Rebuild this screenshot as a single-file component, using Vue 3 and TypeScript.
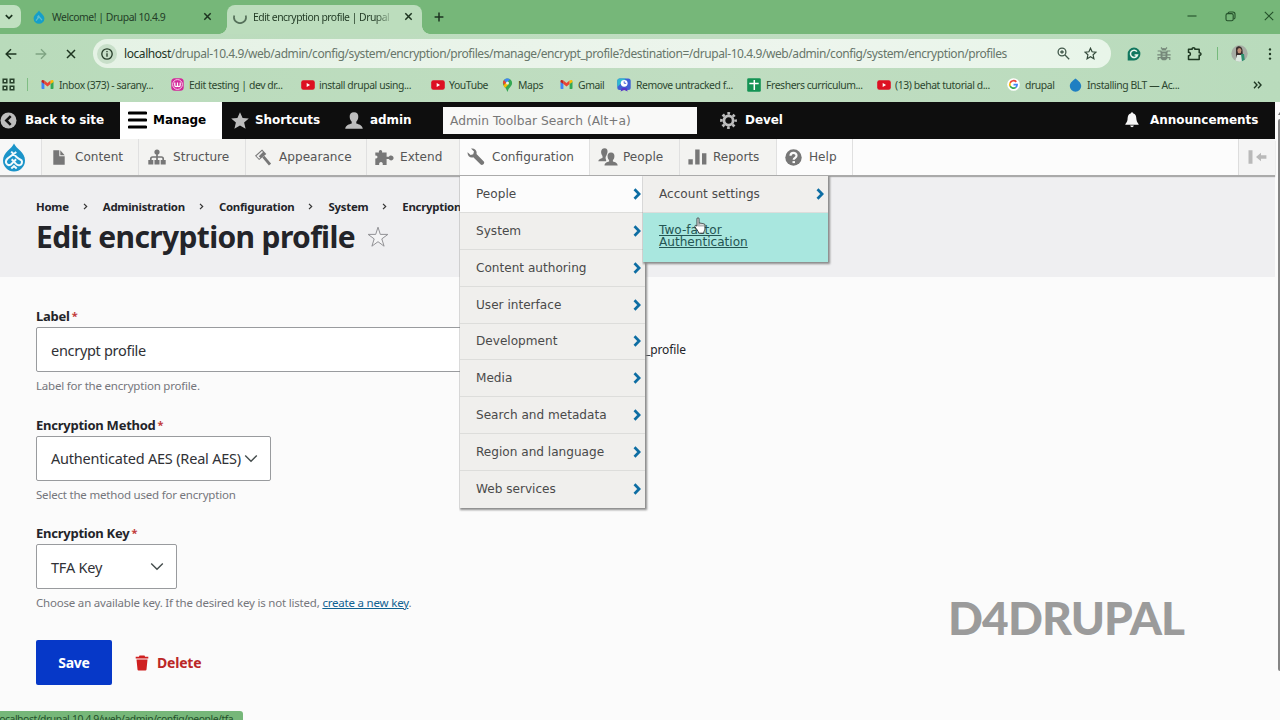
<script setup lang="ts">
interface Bookmark { icon: string; label: string }
interface TrayItem { icon: string; label: string; tone?: string }

const url = {
  host: 'localhost',
  path: '/drupal-10.4.9/web/admin/config/system/encryption/profiles/manage/encrypt_profile?destination=/drupal-10.4.9/web/admin/config/system/encryption/profiles',
}

const bookmarks: Bookmark[] = [
  { icon: 'gmail', label: 'Inbox (373) - sarany...' },
  { icon: 'wamp', label: 'Edit testing | dev dr...' },
  { icon: 'youtube', label: 'install drupal using...' },
  { icon: 'youtube', label: 'YouTube' },
  { icon: 'maps', label: 'Maps' },
  { icon: 'gmail', label: 'Gmail' },
  { icon: 'bot', label: 'Remove untracked f...' },
  { icon: 'sheet', label: 'Freshers curriculum...' },
  { icon: 'youtube', label: '(13) behat tutorial d...' },
  { icon: 'google', label: 'drupal' },
  { icon: 'drop', label: 'Installing BLT — Ac...' },
]

const tray: TrayItem[] = [
  { icon: 'content', label: 'Content' },
  { icon: 'structure', label: 'Structure' },
  { icon: 'appearance', label: 'Appearance' },
  { icon: 'extend', label: 'Extend' },
  { icon: 'config', label: 'Configuration', tone: 'light' },
  { icon: 'people', label: 'People' },
  { icon: 'reports', label: 'Reports' },
  { icon: 'assist', label: 'Help', tone: 'light' },
]

const menu: string[] = [
  'People', 'System', 'Content authoring', 'User interface', 'Development',
  'Media', 'Search and metadata', 'Region and language', 'Web services',
]

const crumbs: string[] = ['Home', 'Administration', 'Configuration', 'System', 'Encryption']
</script>

<template>
  <div class="screen">
    <header class="chrome">
      <div class="tabstrip">
        <div class="tab-search">
          <svg width="10" height="8" viewBox="0 0 10 8"><path d="M1.8 2.2 5 5.4 8.2 2.2" fill="none" stroke="#1d3420" stroke-width="1.7" /></svg>
        </div>
        <div class="tab idle">
          <svg class="fav" width="12" height="14" viewBox="0 0 12 14"><path d="M6 .4C7 2.6 11.4 4.7 11.4 8.4A5.4 5.4 0 0 1 .6 8.4C.6 4.7 5 2.6 6 .4Z" fill="#159fc9" /><path d="M3 10.6 6.1 6.8 9 10.2M4.3 7.5 6 5.4" fill="none" stroke="#5fbccb" stroke-width="1.2" /></svg>
          <span class="tab-title">Welcome! | Drupal 10.4.9</span>
          <svg class="x" width="9" height="9" viewBox="0 0 9 9"><path d="m1.3 1.3 6.4 6.4m0-6.4L1.3 7.7" stroke="#1d3420" stroke-width="1.5" /></svg>
        </div>
        <div class="tab active">
          <svg class="spin" width="14" height="14" viewBox="0 0 14 14"><path d="M1.300 5.500A5.900 5.900 0 0 0 4 12.300Q7 14 10 12.300A5.900 5.900 0 0 0 12.700 5.500" fill="none" stroke="#55705a" stroke-width="1.7" /></svg>
          <span class="tab-title second">Edit encryption profile | Drupal</span>
          <svg class="x" width="9" height="9" viewBox="0 0 9 9"><path d="m1.3 1.3 6.4 6.4m0-6.4L1.3 7.7" stroke="#1d3420" stroke-width="1.5" /></svg>
        </div>
        <svg class="plus" width="10" height="10" viewBox="0 0 10 10"><path d="M5 .6v8.8M.6 5h8.8" stroke="#1d3420" stroke-width="1.5" /></svg>
        <div class="window-buttons">
          <svg width="10" height="10" viewBox="0 0 10 10"><path d="M.5 5h9" stroke="#24502a" stroke-width="1.1" /></svg>
          <svg width="11" height="11" viewBox="0 0 11 11"><rect x="1" y="2.6" width="7.2" height="7.2" rx="1.6" fill="none" stroke="#24502a" stroke-width="1.1" /><path d="M3 2.4C3 1.4 3.6 1 4.6 1h3.2C9.400 1 10 1.800 10 3.200v3.200C10 7.600 9.500 8 8.600 8" fill="none" stroke="#24502a" stroke-width="1.100" /></svg>
          <svg width="10" height="10" viewBox="0 0 10 10"><path d="m.8.8 8.400 8.400m0-8.400L.8 9.200" stroke="#24502a" stroke-width="1.100" /></svg>
        </div>
      </div>

      <div class="navbar">
        <svg class="nav-icon" width="12" height="12" viewBox="0 0 12 12"><path d="M11.400 6H1.500M6 1.200 1.200 6 6 10.800" fill="none" stroke="#1d3420" stroke-width="1.500" /></svg>
        <svg class="nav-icon" width="12" height="12" viewBox="0 0 12 12"><path d="M.6 6h9.900M6 1.200 10.800 6 6 10.800" fill="none" stroke="#7fa483" stroke-width="1.300" /></svg>
        <svg class="nav-icon" width="12" height="12" viewBox="0 0 12 12"><path d="m2 2 8 8m0-8-8 8" stroke="#1d3420" stroke-width="1.500" /></svg>
        <div class="omnibox">
          <span class="info"><svg width="12" height="12" viewBox="0 0 12 12"><circle cx="6" cy="6" r="5.200" fill="none" stroke="#243a27" stroke-width="1.300" /><path d="M6 5.300v3.400M6 3v1.300" stroke="#243a27" stroke-width="1.300" /></svg></span>
          <span class="url"><b>{{ url.host }}</b>{{ url.path }}</span>
          <svg class="zoom" width="13" height="13" viewBox="0 0 13 13"><circle cx="5" cy="5" r="3.900" fill="none" stroke="#41584a" stroke-width="1.300" /><path d="m8 8 4.200 4.200M3.200 5h3.600M5 3.200v3.600" stroke="#41584a" stroke-width="1.300" /></svg>
          <svg class="fav-star" width="13" height="13" viewBox="0 0 13 13"><path d="m6.500 1.200 1.600 3.600 3.900.4-2.900 2.600.8 3.900-3.400-2-3.400 2 .8-3.900L1 5.200l3.900-.4z" fill="none" stroke="#33493a" stroke-width="1.200" /></svg>
        </div>
        <div class="extensions">
          <svg width="14" height="14" viewBox="0 0 14 14"><path d="M7 .6a6.400 6.400 0 1 1 0 12.800H.7V7A6.300 6.300 0 0 1 7 .6Z" fill="#11775f" /><path d="M9.900 4.600A3.600 3.600 0 1 0 10.500 8H7.600" fill="none" stroke="#e8f6ec" stroke-width="1.500" /></svg>
          <svg width="14" height="14" viewBox="0 0 14 14"><path d="M4.500 3.600a2.500 2.500 0 0 1 5 0zM3.600 4.400h6.800v5.500a3.400 3.400 0 0 1-6.800 0z" fill="#76887a" /><path d="M.7 4h3l1 2M13.300 4h-3l-1 2M.3 7.800h13.400M1.200 13v-2.300h3M12.800 13v-2.300h-3M4 .5l1.500 1.700M10 .5 8.500 2.200" fill="none" stroke="#76887a" stroke-width="1.200" /><path d="M5.500 7h3M5.500 9.300h3" stroke="#bcdcc0" /></svg>
          <svg width="15" height="15" viewBox="0 0 15 15"><path d="M1.500 3.200h3.700c-.6-1.900 3.200-1.900 2.600 0h4.400v3.500c2.300-.6 2.300 3.200 0 2.600v4.200H1.500V9.700c2.500.3 2.500-3.700 0-3.400z" fill="none" stroke="#1f3823" stroke-width="1.500" stroke-linejoin="round" /></svg>
          <i class="ext-line"></i>
          <svg width="17" height="17" viewBox="0 0 17 17"><defs><clipPath id="face"><circle cx="8.500" cy="8.500" r="8.200" /></clipPath></defs><g clip-path="url(#face)"><path fill="#a6ada4" d="M0 0h17v17H0z" /><path fill="#3b2f2d" d="M5 3c2-3 6-2 6.500 2L12 13H5z" /><ellipse cx="8.400" cy="5.600" rx="2" ry="2.700" fill="#c08f76" /><path fill="#dce7df" d="m4 17 2-7h5l2 7z" /><path fill="#2c8f6c" d="M10 9h3l1 8h-3z" /></g></svg>
          <svg class="dots" width="4" height="14" viewBox="0 0 4 14"><circle cx="2" cy="2.400" r="1.200" fill="#1f3823" /><circle cx="2" cy="7" r="1.200" fill="#1f3823" /><circle cx="2" cy="11.600" r="1.200" fill="#1f3823" /></svg>
        </div>
      </div>

      <div class="bookmarks">
        <svg class="apps" width="13" height="13" viewBox="0 0 13 13"><path d="M1.200 1.200h3.600v3.600H1.200zM8.200 1.200h3.600v3.600H8.200zM1.200 8.200h3.600v3.600H1.200zM8.200 8.200h3.600v3.600H8.200z" fill="none" stroke="#27402a" stroke-width="1.500" /></svg>
        <i class="divider"></i>
        <div class="marks">
          <div v-for="(b, i) in bookmarks" :key="i" class="mark" :class="b.icon">
            <svg v-if="b.icon === 'gmail'" width="13" height="11" viewBox="0 0 13 11"><path fill="#4285f4" d="M.5 2.500 3.400 4.500V10H1.300a.8.800 0 0 1-.8-.8z" /><path fill="#34a853" d="M9.600 4.500 12.500 2.500v6.700a.8.800 0 0 1-.8.800H9.600z" /><path fill="#ea4335" d="M3.400 1.600 6.500 4l3.100-2.400v3.500L6.500 7.400 3.400 5.100z" /><path fill="#c5221f" d="M.5 2.300c0-1.400 1.500-1.800 2.900-.7v3.500L.5 3.100z" /><path fill="#fbbc04" d="M12.500 2.300c0-1.400-1.500-1.800-2.900-.7v3.500l2.900-2z" /></svg>
            <svg v-else-if="b.icon === 'wamp'" width="13" height="13" viewBox="0 0 13 13"><rect x=".3" y=".3" width="12.400" height="12.400" rx="3.500" fill="#d3279a" /><circle cx="6.500" cy="6.500" r="4.900" fill="none" stroke="#f7cbe8" /><path d="M3.800 4.500v2.800a1.350 1.350 0 0 0 2.700 0V4.500v2.800a1.350 1.350 0 0 0 2.700 0V4.500" fill="none" stroke="#fff" stroke-width="1.200" /></svg>
            <svg v-else-if="b.icon === 'youtube'" width="14" height="10" viewBox="0 0 14 10"><rect x=".2" y=".2" width="13.600" height="9.600" rx="2.200" fill="#dd1022" /><path d="M5.700 3v4l3.400-2z" fill="#fff" /></svg>
            <svg v-else-if="b.icon === 'maps'" width="11" height="14" viewBox="0 0 11 14"><path fill="#34a853" d="M.9 5A4.600 4.600 0 0 1 10.100 5c0 3.500-3.600 4.700-4.300 8.300-.1.500-.6.500-.7 0C4.400 9.700.9 8.500.9 5z" /><path fill="#fbbc04" d="M1.400 7.200 4 4.700l2.600 1.500L3 10z" /><path fill="#ea4335" d="M2.100 1.900 4.500 4 2.100 6.800C.5 5 .7 3.300 2.100 1.900z" /><path fill="#4285f4" d="M2.100 1.900C4 .1 6.500.100 8 1.200L4.500 4.700z" /><circle cx="5.500" cy="4.900" r="1.500" fill="#e8f3e8" /></svg>
            <svg v-else-if="b.icon === 'bot'" width="14" height="14" viewBox="0 0 14 14"><rect x=".3" y=".5" width="13.400" height="11.500" rx="2.500" fill="#3f5fd5" /><path d="M.3 3A2.500 2.500 0 0 1 2.800.5H9L.3 9z" fill="#30b9cf" /><circle cx="7.200" cy="5.300" r="3.400" fill="#fff" /><path d="M7.200 3.300v2h2" fill="none" stroke="#4962d8" /><path d="M3.500 13.600 5 9.800h4.500l1.200 3.800-3.500-1.500z" fill="#5636c7" /></svg>
            <svg v-else-if="b.icon === 'sheet'" width="14" height="14" viewBox="0 0 14 14"><rect x=".2" y=".2" width="13.600" height="13.600" rx="1.300" fill="#149354" /><path d="M7.300 2v10M2.300 5.500h9.400" stroke="#fff" stroke-width="1.500" /></svg>
            <svg v-else-if="b.icon === 'google'" width="13" height="13" viewBox="0 0 13 13"><circle cx="6.500" cy="6.500" r="6.300" fill="#fff" /><g fill="none" stroke-width="1.700"><path d="M9.300 3.900A3.700 3.700 0 0 0 3.200 4.900" stroke="#ea4335" /><path d="M3.200 4.900a3.700 3.700 0 0 0 0 3.300" stroke="#fbbc04" /><path d="M3.200 8.200a3.700 3.700 0 0 0 5.600 1.200" stroke="#34a853" /><path d="M8.800 9.400a3.500 3.500 0 0 0 1.300-2.700H6.500" stroke="#4285f4" /></g></svg>
            <svg v-else width="13" height="14" viewBox="0 0 13 14"><path d="M6.500.5c1.500 1.400 5.700 3.800 5.700 7.500a5.700 5.700 0 0 1-11.400 0C.8 4.300 5 1.900 6.500.5z" fill="#1f7fc2" /></svg>
            <span>{{ b.label }}</span>
          </div>
        </div>
        <svg class="more" width="9" height="8" viewBox="0 0 9 8"><path d="m1 .8 3 3.200-3 3.200M5 .8 8 4 5 7.200" fill="none" stroke="#1f3823" stroke-width="1.400" /></svg>
      </div>
    </header>

    <div class="page">
      <nav class="adminbar">
        <div class="bar-item back"><svg width="17" height="17" viewBox="0 0 17 17"><circle cx="8.500" cy="8.500" r="8" fill="#bdbdbd" /><path d="M10.700 4.200 6.300 8.500l4.400 4.300" fill="none" stroke="#111" stroke-width="2.500" /></svg><span>Back to site</span></div>
        <div class="bar-item manage"><svg width="19" height="18" viewBox="0 0 19 18"><path d="M1.300 2h16.400M1.300 9h16.400M1.300 16h16.400" stroke="#000" stroke-width="3" stroke-linecap="round" /></svg><span>Manage</span></div>
        <div class="bar-item shortcuts"><svg width="18" height="17" viewBox="0 0 18 17"><path d="m9 .3 2.600 5.600 6.200.6-4.700 4 1.500 6.200L9 13.400l-5.600 3.300 1.500-6.200-4.700-4 6.200-.6z" fill="#bdbdbd" /></svg><span>Shortcuts</span></div>
        <div class="bar-item user"><svg width="18" height="17" viewBox="0 0 18 17"><path d="M9 .3c3 0 4.500 2 4.300 4.800-.1 2-1 3.600-2 4.600v1.800c2.500 1 6 1.400 6.500 5.200H.200c.5-3.800 4-4.200 6.500-5.200V9.700c-1-1-1.900-2.600-2-4.600C4.500 2.300 6 .3 9 .3z" fill="#bdbdbd" /></svg><span>admin</span></div>
        <div class="search">Admin Toolbar Search (Alt+a)</div>
        <div class="bar-item devel"><svg width="17" height="17" viewBox="0 0 17 17"><circle cx="8.500" cy="8.500" r="4.600" fill="none" stroke="#bdbdbd" stroke-width="2.800" /><circle cx="8.500" cy="8.500" r="7.100" fill="none" stroke="#bdbdbd" stroke-width="2.600" stroke-dasharray="2.700 2.876" stroke-dashoffset="1.350" /></svg><span>Devel</span></div>
        <div class="bar-item announce"><svg width="14" height="16" viewBox="0 0 14 16"><path d="M6 1.300a1 1 0 0 1 2 0c3.200.8 3.300 4 3.500 6.500.2 2.300 1.700 3.300 2.300 5H.200c.6-1.700 2.100-2.700 2.300-5 .2-2.500.3-5.700 3.500-6.500zM5.200 13.600h3.600c-.4 2.300-3.200 2.300-3.600 0z" fill="#f6f6f6" /></svg><span>Announcements</span></div>
      </nav>

      <nav class="tray">
        <div class="logo"><svg width="24" height="29" viewBox="0 0 24 29"><path d="M12 .6C14 5.800 23 9 23 17.500a11 11 0 0 1-22 0C1 9 10 5.800 12 .6z" fill="#1b94c9" /><path d="M9.200 8.600 14.800 14.200C18.400 17.800 19.800 15.900 20 18.600c.1 3.900-3.800 4.800-6 2.300L9.700 16.200M14.300 9 5.600 15.500c-3.700 3.600-.5 7.900 3.100 6.100l5.400-5.300M9.300 25.500 12 23l2.700 2.500" fill="none" stroke="#f2fafc" stroke-width="2" /></svg></div>
        <div v-for="t in tray" :key="t.label" class="tray-item" :class="[t.icon, t.tone]">
          <svg v-if="t.icon === 'content'" width="12" height="15" viewBox="0 0 12 15"><path d="M.3.300h6v6h5.400v8.400H.3zM7.300.300l4.400 4.900H7.300z" fill="#777" /></svg>
          <svg v-else-if="t.icon === 'structure'" width="18" height="16" viewBox="0 0 18 16"><path d="M9 4v8M2.800 12V9.800Q2.800 8 4.600 8h8.800q1.800 0 1.800 1.800V12" fill="none" stroke="#777" stroke-width="1.700" /><circle cx="9" cy="3" r="2.600" fill="#777" /><path d="M.3 11h5v4.600h-5zM6.500 11h5v4.600h-5zM12.700 11h5v4.600h-5z" fill="#777" /></svg>
          <svg v-else-if="t.icon === 'appearance'" width="17" height="17" viewBox="0 0 17 17"><path d="M8.100.5 12.300 5 5.100 11 1 6.800z" fill="#777" /><path d="M2.400 6.900 8 1.900l1 1L4.800 7.300l1.600 1.400-1.300 1z" fill="#eee" /><path d="M9.300 7.700 16 15.500" stroke="#777" stroke-width="2.800" /></svg>
          <svg v-else-if="t.icon === 'extend'" width="19" height="17" viewBox="0 0 19 17"><path d="M.3 3.600H4C2.700.2 8.300.2 7 3.600h4.600v4.100h2.200c1.200-2.200 4.800-1.500 4.800 1.200s-3.600 3.400-4.800 1.200h-2.200v5.800H7.700c1-3.900-4.400-3.900-3.500 0H.3V9.400c2.900 1 2.900-3.500 0-2.700z" fill="#777" /></svg>
          <svg v-else-if="t.icon === 'config'" width="18" height="18" viewBox="0 0 18 18"><path d="M4 .6c3.400-.8 6.400 2 5.500 5.400l7.300 7.400c1.500 1.600-1.500 4.600-3.100 3.100L6.300 9.200C3 10.200.2 7.500.6 4.300L3.600 7 6.200 6.200 7 3.600z" fill="#777" /></svg>
          <svg v-else-if="t.icon === 'people'" width="20" height="18" viewBox="0 0 20 18"><path d="M6.500.3c2.500 0 3.500 2 2.900 4.400l-1 2.700c-2 3 .3 3.900-.3 5.800H.3c.2-2.200 2-2.500 4.200-3.300V8C2.300 5 2.700.3 6.500.3z" fill="#777" /><path d="M13 4.500c2.600 0 3.700 1.900 3.400 4.200-.1 1.500-.7 2.500-1.500 3.300v1.400c2.300.8 4.500 1 4.800 4.100H6.500c.3-3.100 2.300-3.300 4.600-4.100V12c-.8-.8-1.400-1.800-1.500-3.300-.3-2.300.8-4.200 3.400-4.200z" fill="#777" /></svg>
          <svg v-else-if="t.icon === 'reports'" width="19" height="16" viewBox="0 0 19 16"><path d="M.4 10.300h4.400v5.300H.4zM7.200.4h4.400v15.200H7.200zM14 4.300h4.400v11.300H14z" fill="#777" /></svg>
          <svg v-else width="17" height="17" viewBox="0 0 17 17"><circle cx="8.500" cy="8.500" r="8.200" fill="#777" /><path d="M5.500 6.700c.1-3.900 6.100-3.700 6 0 0 2.200-2.800 2-2.800 4" fill="none" stroke="#fafafa" stroke-width="2.200" /><path d="M7.500 12.100h2.500v2H7.500z" fill="#fafafa" /></svg>
          <span>{{ t.label }}</span>
        </div>
        <div class="tray-space"></div>
        <div class="collapse"><svg width="19" height="14" viewBox="0 0 19 14"><path d="M.5.300h4v13.400h-4zM8 7l5-4.200v2.500h5.400v3.400H13v2.500z" fill="#b9b9b9" /></svg></div>
      </nav>

      <section class="hero">
        <div class="crumbs">
          <template v-for="(c, i) in crumbs" :key="c">
            <svg v-if="i" class="sep" width="5" height="7" viewBox="0 0 5 7"><path d="m1 .8 2.700 2.700L1 6.200" fill="none" stroke="#333" stroke-width="1.200" /></svg>
            <span>{{ c }}</span>
          </template>
        </div>
        <h1><span>Edit encryption profile</span><svg width="22" height="22" viewBox="0 0 22 22"><path d="m11 1.200 2.300 7.200h7.600l-6.100 4.500 2.300 7.300-6.100-4.500-6.100 4.500 2.300-7.300-6.100-4.500h7.600z" fill="#f4f4f5" stroke="#929296" stroke-width="1" /></svg></h1>
      </section>

      <main class="form">
        <label>Label<em>*</em></label>
        <div class="name-row"><div class="field text">encrypt profile</div><span class="machine">_profile</span></div>
        <p class="hint">Label for the encryption profile.</p>
        <label>Encryption Method<em>*</em></label>
        <div class="field method"><span>Authenticated AES (Real AES)</span><svg width="14" height="9" viewBox="0 0 14 9"><path d="m1.200 1.500 5.800 5.700 5.800-5.700" fill="none" stroke="#444c4c" stroke-width="1.400" /></svg></div>
        <p class="hint">Select the method used for encryption</p>
        <label>Encryption Key<em>*</em></label>
        <div class="field key"><span>TFA Key</span><svg width="14" height="9" viewBox="0 0 14 9"><path d="m1.200 1.500 5.800 5.700 5.800-5.700" fill="none" stroke="#444c4c" stroke-width="1.400" /></svg></div>
        <p class="hint">Choose an available key. If the desired key is not listed, <a>create a new key</a>.</p>
        <div class="actions">
          <button type="button">Save</button>
          <svg width="14" height="16" viewBox="0 0 14 16"><path d="M4.500.5h5l.6 1.300h3.200v1.700H.7V1.800h3.200zM1.500 4.400h11l-1 10.200c-.1.600-.4.900-1 .9h-7c-.6 0-.9-.3-1-.9z" fill="#cf2020" /></svg>
          <span class="delete">Delete</span>
        </div>
      </main>

      <div class="dropdown">
        <div v-for="(m, i) in menu" :key="m" class="menu-row" :class="{ open: i === 0 }">
          <span>{{ m }}</span>
          <svg width="8" height="12" viewBox="0 0 8 12"><path d="m1.500 1.300 4.600 4.700-4.600 4.700" fill="none" stroke="#0d6da3" stroke-width="2.700" /></svg>
        </div>
      </div>
      <div class="submenu">
        <div class="menu-row"><span>Account settings</span><svg width="8" height="12" viewBox="0 0 8 12"><path d="m1.500 1.300 4.600 4.700-4.600 4.700" fill="none" stroke="#0d6da3" stroke-width="2.700" /></svg></div>
        <div class="tfa">Two-factor Authentication</div>
      </div>
    </div>

    <div class="scrollbar"><i class="up"></i><i class="thumb"></i></div>
    <svg class="pointer" width="13" height="17" viewBox="0 0 13 17"><path d="M3 1.800c0-1.400 2-1.400 2 0v4.700c.1-.9 1.900-.9 2 .2.300-.8 1.800-.6 1.900.5.500-.8 2-.4 2 .8v3.500c0 1.500-.9 2.300-1.200 4.700H4.800C4 13.500 2.400 12.200 1 9.800c-.7-1.300.8-2 2-.6z" fill="#fff" stroke="#2b3233" stroke-width=".9" /><path d="M5 7v2.500M7 7.500v2M9 8v1.500" stroke="#2b3233" stroke-width=".7" /></svg>
    <div class="watermark">D4DRUPAL</div>
    <div class="status"><span>localhost/drupal-10.4.9/web/admin/config/people/tfa</span></div>
  </div>
</template>

<style>
html, body { margin: 0; overflow: hidden; }
</style>

<style scoped>
* { box-sizing: border-box; }
svg { display: block; flex: none; }
span { white-space: nowrap; }
.screen { position: relative; width: 1280px; height: 720px; overflow: hidden; background: #fbfbfb; font-family: "Noto Sans", "Open Sans", sans-serif; color: #232429; }

.chrome { height: 102px; background: linear-gradient(90deg, #b9dbbb, #c0ddc1 55%, #b9dbbc); }
.tabstrip { display: flex; align-items: center; height: 33.500px; background: #76b779; }
.tab-search { display: flex; align-items: center; justify-content: center; width: 21px; height: 23px; padding-right: 3px; border-radius: 0 7px 7px 0; background: #c0e0c0; }
.tab { display: flex; align-items: center; height: 33px; font-size: 10.400px; color: #243d27; }
.tab-title { line-height: 16px; }
.idle { width: 206px; padding-left: 12px; }
.idle .tab-title { width: 151px; margin-left: 7px; letter-spacing: -.45px; }
.active { width: 195px; height: 28.500px; align-self: flex-end; padding: 0 0 5px 6px; border-radius: 8px 8px 0 0; background: #bcddbd; position: relative; }
.active::before, .active::after { content: ""; position: absolute; bottom: 0; width: 8px; height: 8px; }
.active::before { left: -8px; background: radial-gradient(circle at 0 0, transparent 7.500px, #bcddbd 8px); }
.active::after { right: -8px; background: radial-gradient(circle at 100% 0, transparent 7.500px, #bcddbd 8px); }
.second { width: 142px; margin: 0 9px 0 6px; letter-spacing: -.5px; -webkit-mask: linear-gradient(90deg, #000 86%, #0003 97%); mask: linear-gradient(90deg, #000 86%, #0003 97%); }
.plus { margin-left: 12px; }
.window-buttons { display: flex; gap: 28px; margin-left: 743px; }

.navbar { display: flex; align-items: center; height: 40px; padding-left: 5px; }
.nav-icon { margin-right: 18px; }
.omnibox { display: flex; align-items: center; width: 1018px; height: 29px; margin-left: -2px; padding-left: 4px; border-radius: 15px; background: linear-gradient(90deg, #e5f2e5, #edf5ed 70%, #e8f5e9); }
.info { display: flex; align-items: center; justify-content: center; width: 20px; height: 20px; border-radius: 50%; background: #c8dfc9; }
.url { width: 933px; margin-left: 7px; font-size: 12px; line-height: 20px; letter-spacing: -.43px; color: #67766a; }
.url b { font-weight: 400; color: #243527; }
.fav-star { margin-left: 14px; }
.extensions { display: flex; align-items: center; margin-left: 16px; gap: 16px; }
.ext-line { width: 1px; height: 13px; margin: 0 -3px 0 -1px; background: #76b97c; }
.dots { margin-left: 4px; }

.bookmarks { display: flex; align-items: center; height: 22px; padding-left: 2px; }
.divider { width: 1px; height: 13px; margin: 0 13px 0 12px; background: #7fbd83; }
.marks { display: grid; grid-template-columns: 130px 130px 130px 71px 58px 57px 130px 130px 130px 62px 182px; }
.mark { display: flex; align-items: center; gap: 5px; height: 20px; font-size: 10.400px; letter-spacing: -.42px; color: #2c472f; }
.mark.youtube { gap: 4px; }
.more { margin-left: 2px; }

.page { position: relative; width: 1275px; height: 618px; }
.adminbar { display: grid; grid-template-columns: 120px 102px 114px 107px 254px 420px 1fr; align-items: stretch; height: 37px; background: #0e0e0e; font: bold 12px/20px "DejaVu Sans", sans-serif; letter-spacing: -.06px; color: #fff; }
.bar-item { display: flex; align-items: center; padding-bottom: 1px; }
.back { gap: 8px; }
.manage { gap: 6px; padding-left: 8px; background: #fff; color: #000; }
.shortcuts { gap: 6px; padding-left: 9px; }
.user { gap: 7px; padding-left: 9px; }
.devel { gap: 8px; padding-left: 23px; }
.announce { gap: 11px; padding-left: 8px; }
.search { align-self: center; height: 27px; padding-left: 7px; background: #f9f9f8; font: 12.250px/28px "DejaVu Sans", sans-serif; letter-spacing: 0; color: #777; white-space: nowrap; }

.tray { display: grid; grid-template-columns: 41px 97px 107px 121px 93px 130px 90px 97px 76px 386px 1fr; height: 36px; position: relative; z-index: 1; background: #fcfcfc; box-shadow: 0 2px 1px #aaa; font: 12.100px/20px "DejaVu Sans", sans-serif; color: #565656; }
.logo { display: flex; align-items: center; padding: 1px 0 0 2px; background: #f7f7f7; }
.tray-item { display: flex; align-items: center; border-left: 1px solid #e0e0e0; background: #f3f3f1; }
.tray-item.light { background: #fcfcfc; }
.content { padding-left: 11px; } .content span { margin-left: 10px; }
.structure { padding-left: 9px; } .structure span { margin-left: 7px; }
.appearance { padding-left: 8px; } .appearance span { margin-left: 8px; }
.extend { padding-left: 8px; } .extend span { margin-left: 6px; }
.config { padding-left: 7px; } .config span { margin-left: 7px; }
.people { padding-left: 8px; } .people span { margin-left: 5px; }
.reports { padding-left: 8px; } .reports span { margin-left: 6px; }
.assist { padding-left: 8px; } .assist span { margin-left: 7px; }
.tray-space { border-left: 1px solid #e0e0e0; }
.collapse { display: flex; align-items: center; padding-left: 9px; border-left: 1px solid #ddd; background: #f4f4f4; }

.hero { height: 102px; padding: 22px 0 0 36px; background: #efeff1; }
.crumbs { display: flex; align-items: center; height: 18px; font-size: 11.400px; font-weight: 700; letter-spacing: -.25px; }
.sep { margin: 0 15px 0 14px; }
.hero h1 { display: flex; align-items: center; gap: 12px; height: 40px; margin: 2px 0 0; font-size: 30px; line-height: 40px; letter-spacing: -.65px; }

.form { padding: 29px 0 0 36px; }
.form label { display: block; height: 21px; font-size: 13px; line-height: 20px; font-weight: 700; letter-spacing: -.25px; }
.form label em { display: inline-block; margin-left: 2px; color: #c23a3a; font-size: 11px; line-height: 16px; vertical-align: 1px; font-style: normal; }
.name-row { display: flex; align-items: center; gap: 10px; }
.field { display: flex; align-items: center; height: 45px; padding-left: 14px; border: 1px solid #999b9e; border-radius: 2px; background: #fff; font-size: 14.500px; letter-spacing: -.2px; color: #303136; }
.text { width: 599px; letter-spacing: -.3px; }
.machine { font-size: 12px; letter-spacing: -.1px; }
.hint { height: 18px; margin: 5px 0 19.500px; font-size: 11.500px; line-height: 18px; letter-spacing: -.2px; color: #75767b; }
.hint a { color: #0f6191; text-decoration: underline; }
.method { width: 235px; justify-content: space-between; padding-right: 12px; }
.key { width: 141px; justify-content: space-between; padding-right: 12px; }
.actions { display: flex; align-items: center; margin-top: 28px; }
.actions button { width: 76px; height: 45px; margin-right: 23px; padding: 0; border: 0; border-radius: 2px; background: #0638c8; color: #fff; font: bold 14px "Noto Sans", sans-serif; letter-spacing: -.3px; }
.delete { margin-left: 8px; color: #bb2727; font-size: 14px; font-weight: 700; letter-spacing: -.2px; }

.dropdown, .submenu { position: absolute; top: 74px; z-index: 2; background: #f0efed; box-shadow: 1px 1px 2px 1px #8b8b8b; font: 12.100px/12px "DejaVu Sans", sans-serif; color: #4a4a4a; clip-path: inset(0 -5px -5px -1px); }
.dropdown { left: 460px; width: 185px; }
.submenu { left: 643px; width: 185px; }
.menu-row { display: flex; align-items: center; justify-content: space-between; height: 36.890px; padding: 0 4px 0 16px; border-bottom: 1px solid #dddddb; }
.menu-row:last-child { border-bottom: 0; }
.menu-row.open { background: #fcfcfc; }
.tfa { height: 49px; padding: 11.500px 60px 0 16px; background: #a9e7df; color: #245553; text-decoration: underline; }

.scrollbar { position: absolute; left: 1275px; top: 102px; width: 5px; height: 618px; background: #fbfbfb; }
.up { position: absolute; left: 3px; top: 8px; width: 0; height: 0; border: solid transparent; border-width: 0 0 5px 3px; border-bottom-color: #777; }
.thumb { position: absolute; left: 3px; top: 17px; width: 4px; height: 552px; border-radius: 3px; background: #858585; }
.pointer { position: absolute; left: 694px; top: 217px; z-index: 4; }
.watermark { position: absolute; left: 948px; top: 590px; font: 900 46px/56px Lato, sans-serif; letter-spacing: -.9px; color: #9b9b9b; }
.status { position: absolute; left: 0; top: 711px; z-index: 5; width: 243px; height: 20px; border-radius: 0 3px 0 0; background: #76b779; font-size: 10.400px; line-height: 16px; color: #24502a; }
.status span { margin-left: -3px; letter-spacing: -.47px; }
</style>
